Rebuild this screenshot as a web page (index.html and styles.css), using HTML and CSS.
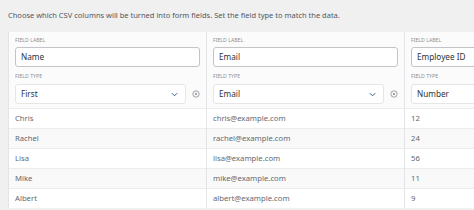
FILE: index.html
```html
<!DOCTYPE html>
<html>
<head>
<meta charset="utf-8">
<link rel="stylesheet" href="styles.css">
</head>
<body>
<div class="intro">Choose which CSV columns will be turned into form fields. Set the field type to match the data.</div>
<div class="table">
  <div class="col">
    <div class="head">
      <div class="lbl">FIELD LABEL</div>
      <div class="input">Name</div>
      <div class="lbl lbl2">FIELD TYPE</div>
      <div class="typerow">
        <div class="select">First<svg class="chev" viewBox="0 0 8 5"><path d="M1 1l3 3 3-3" fill="none" stroke="#2f5d8f" stroke-width="1.1"/></svg></div>
        <svg class="clear" viewBox="0 0 8 8"><circle cx="4" cy="4" r="3.2" fill="none" stroke="#8c8f94" stroke-width="0.8"/><path d="M2.8 2.8l2.4 2.4M5.2 2.8l-2.4 2.4" stroke="#8c8f94" stroke-width="0.8"/></svg>
      </div>
    </div>
    <div class="cell">Chris</div>
    <div class="cell alt">Rachel</div>
    <div class="cell">Lisa</div>
    <div class="cell alt">Mike</div>
    <div class="cell">Albert</div>
  </div>
  <div class="col">
    <div class="head">
      <div class="lbl">FIELD LABEL</div>
      <div class="input">Email</div>
      <div class="lbl lbl2">FIELD TYPE</div>
      <div class="typerow">
        <div class="select">Email<svg class="chev" viewBox="0 0 8 5"><path d="M1 1l3 3 3-3" fill="none" stroke="#2f5d8f" stroke-width="1.1"/></svg></div>
        <svg class="clear" viewBox="0 0 8 8"><circle cx="4" cy="4" r="3.2" fill="none" stroke="#8c8f94" stroke-width="0.8"/><path d="M2.8 2.8l2.4 2.4M5.2 2.8l-2.4 2.4" stroke="#8c8f94" stroke-width="0.8"/></svg>
      </div>
    </div>
    <div class="cell">chris@example.com</div>
    <div class="cell alt">rachel@example.com</div>
    <div class="cell">lisa@example.com</div>
    <div class="cell alt">mike@example.com</div>
    <div class="cell">albert@example.com</div>
  </div>
  <div class="col">
    <div class="head">
      <div class="lbl">FIELD LABEL</div>
      <div class="input">Employee ID</div>
      <div class="lbl lbl2">FIELD TYPE</div>
      <div class="typerow">
        <div class="select">Number<svg class="chev" viewBox="0 0 8 5"><path d="M1 1l3 3 3-3" fill="none" stroke="#2f5d8f" stroke-width="1.1"/></svg></div>
        <svg class="clear" viewBox="0 0 8 8"><circle cx="4" cy="4" r="3.2" fill="none" stroke="#8c8f94" stroke-width="0.8"/><path d="M2.8 2.8l2.4 2.4M5.2 2.8l-2.4 2.4" stroke="#8c8f94" stroke-width="0.8"/></svg>
      </div>
    </div>
    <div class="cell">12</div>
    <div class="cell alt">24</div>
    <div class="cell">56</div>
    <div class="cell alt">11</div>
    <div class="cell">9</div>
  </div>
</div>
</body>
</html>
```
FILE: styles.css
```css
html, body {
  margin: 0;
  padding: 0;
  background: #f0f0f1;
  font-family: "Noto Sans", "Open Sans", sans-serif;
  overflow: hidden;
}
.intro {
  height: 32px;
  box-sizing: border-box;
  padding: 10px 0 0 8px;
  font-size: 7.5px;
  line-height: 10px;
  color: #50575e;
  white-space: nowrap;
}
.table {
  margin-left: 8px;
  display: flex;
  background: #fff;
  border-left: 1px solid #e2e4e7;
  width: calc(100% - 9px);
  overflow: hidden;
}
.col {
  flex: 0 0 198px;
  border-right: 1px solid #e2e4e7;
  box-sizing: border-box;
}
.head {
  background: #fbfbfb;
  padding: 5px 6px 4px 6px;
  height: 76px;
  box-sizing: border-box;
}
.lbl {
  font-size: 5.2px;
  line-height: 6px;
  color: #8c8f94;
}
.lbl2 {
  margin-top: 6px;
}
.input, .select {
  height: 20px;
  box-sizing: border-box;
  border: 1px solid #c3c4c7;
  border-radius: 3px;
  background: #fff;
  font-size: 8.2px;
  line-height: 18px;
  padding-left: 5px;
  color: #2c3338;
  white-space: nowrap;
}
.input {
  margin-top: 4px;
}
.typerow {
  margin-top: 5px;
  display: flex;
  align-items: center;
}
.select {
  flex: 0 0 171px;
  position: relative;
  border-color: #e6e6e6;
}
.chev {
  position: absolute;
  right: 7px;
  top: 7px;
  width: 7px;
  height: 5px;
}
.clear {
  flex: 0 0 8px;
  width: 8px;
  height: 8px;
  margin-left: 6px;
}
.cell {
  height: 20px;
  box-sizing: border-box;
  border-top: 1px solid #ececec;
  padding-left: 6px;
  font-size: 7.7px;
  line-height: 19px;
  color: #646970;
}
.cell.alt {
  background: #f9f9f9;
}
```
